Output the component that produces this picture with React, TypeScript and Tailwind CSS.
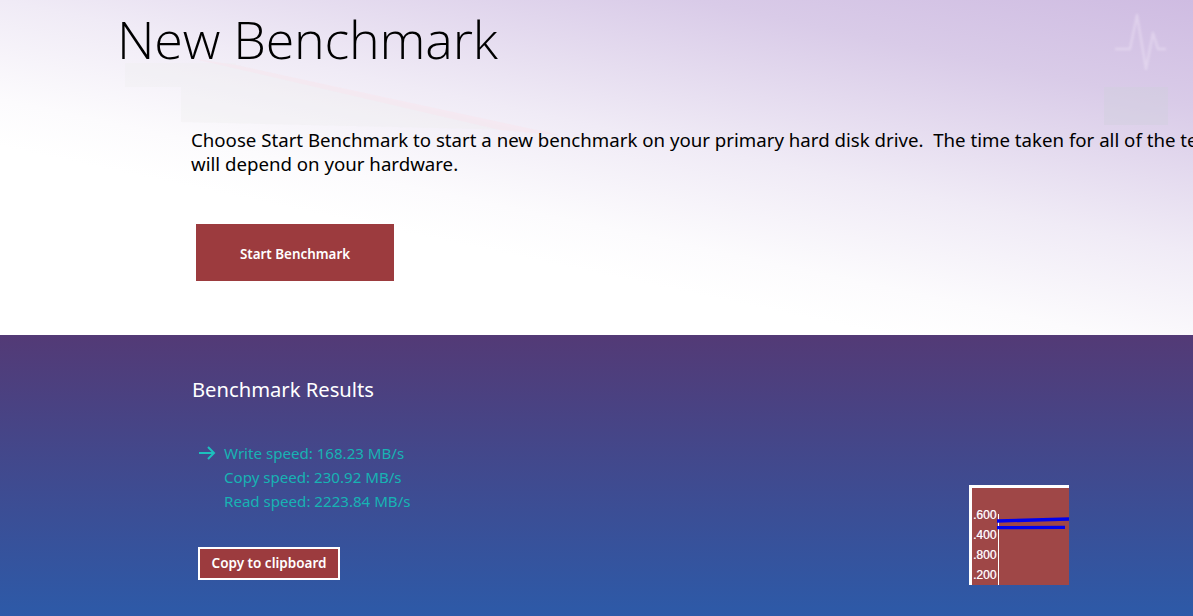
const results = [
  { label: 'Write speed: 168.23 MB/s', current: true },
  { label: 'Copy speed: 230.92 MB/s', current: false },
  { label: 'Read speed: 2223.84 MB/s', current: false },
]

const ticks = [
  { y: 31, label: '.600' },
  { y: 51, label: '.400' },
  { y: 71, label: '.800' },
  { y: 91, label: '.200' },
]

const MiniChart = () => (
  <div className="w-[100px] h-[100px] border-t-[3px] border-l-[3px] border-white bg-[#9f4747]">
    <svg width="97" height="97" viewBox="0 0 97 97" className="block">
      <line x1="26.5" y1="26" x2="26.5" y2="97" stroke="#fff" strokeWidth="1" />
      {ticks.map((t) => (
        <g key={t.y} fill="#fff" fontSize="12" fontFamily="'Liberation Sans', sans-serif">
          <text x="1" y={t.y}>{t.label}</text>
          <text x="1.5" y={t.y} opacity="0.6">{t.label}</text>
        </g>
      ))}
      <path d="M25 33 L97 31" stroke="#0000ee" strokeWidth="3.4" fill="none" />
      <path d="M25 39.7 L93 39.3" stroke="#0000ee" strokeWidth="3.2" fill="none" />
    </svg>
  </div>
)

const PulseIcon = () => (
  <svg width="54" height="60" viewBox="0 0 54 60" fill="none" className="absolute left-[1113px] top-[12px] opacity-40 blur-[0.8px]">
    <path d="M2 37 H17 L24 3 L33 57 L40 21 L45 37 H53" stroke="#f3e9f8" strokeWidth="2.4" strokeLinejoin="round" />
  </svg>
)

// faint wash left behind the heading
const HeadingWash = () => (
  <svg width="640" height="150" viewBox="0 0 640 150" className="absolute left-0 top-0">
    <polygon points="125,63 236,63 236,65 520,130 181,122 181,87 125,87" fill="#eeeeee" opacity="0.35" />
    <polygon points="190,58 236,65 560,135 500,130" fill="#f6e6ef" opacity="0.6" />
  </svg>
)

const App = () => {
  return (
    <div className="w-[1193px] h-[616px] overflow-hidden flex flex-col font-['Noto_Sans','Open_Sans',sans-serif]">
      <section className="relative h-[335px] shrink-0 pl-[117px] overflow-hidden bg-white bg-[linear-gradient(192deg,#cfbce2_0%,#d9cbe8_18%,#f0ebf6_43%,#fcfbfd_60%,#ffffff_68%)]">
        <HeadingWash />
        <div className="absolute left-[1104px] top-[87px] w-[64px] h-[38px] bg-[#d0d0dc] opacity-40" />
        <PulseIcon />
        <h1 className="relative font-['Open_Sans'] font-light text-[52px] leading-[70px] pt-[4px] text-black tracking-[-0.2px]">New Benchmark</h1>
        <p className="relative mt-[54px] ml-[74px] text-[18.67px] leading-[24px] text-black whitespace-pre">
          {'Choose Start Benchmark to start a new benchmark on your primary hard disk drive.  The time taken for all of the tests\nwill depend on your hardware.'}
        </p>
        <button className="relative block mt-[48px] ml-[79px] w-[198px] h-[57px] pt-[3px] bg-[#9c3b3e] text-white text-[13.4px] font-semibold">
          Start Benchmark
        </button>
      </section>
      <section className="flex-1 flex justify-between bg-[linear-gradient(180deg,#533a76_0%,#2d5aa8_100%)]">
        <div className="pl-[192px] pt-[40px]">
          <h2 className="text-[20.2px] leading-[28px] text-white">Benchmark Results</h2>
          <ul className="mt-[38px] ml-[7px] text-[15.1px] leading-[24px] text-[#17b3b3]">
            {results.map((r) => (
              <li key={r.label} className="flex items-center">
                <span className="w-[25px]">
                  {r.current && (
                    <svg width="17" height="14" viewBox="0 0 17 14" fill="none" stroke="#1cc0bd" strokeWidth="2">
                      <path d="M0 7 H15 M9 1 L15 7 L9 13" />
                    </svg>
                  )}
                </span>
                {r.label}
              </li>
            ))}
          </ul>
          <button className="block mt-[34px] ml-[6px] w-[142px] h-[33px] border-2 border-white bg-[#9c3b3e] text-white text-[13.5px] font-semibold">
            Copy to clipboard
          </button>
        </div>
        <div className="pt-[150px] pr-[124px]">
          <MiniChart />
        </div>
      </section>
    </div>
  )
}

export default App
